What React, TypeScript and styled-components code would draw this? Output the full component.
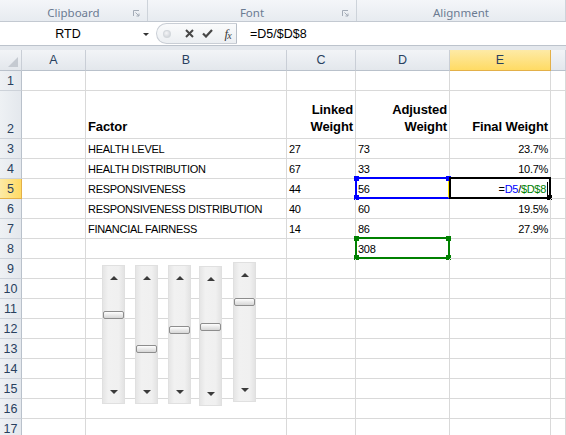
import React from 'react';
import styled, { createGlobalStyle } from 'styled-components';

const GlobalStyle = createGlobalStyle`
    *, *::before, *::after { box-sizing: border-box; }
    html, body { margin: 0; padding: 0; background: #fff; }
    body { font-family: "Liberation Sans", Arial, sans-serif; overflow: hidden; }
`

const Page = styled.div`
    width: 566px;
    height: 435px;
    overflow: hidden;
    background: #fff;
`

/* ---------- ribbon ---------- */
const Ribbon = styled.div`
    height: 22px;
    display: flex;
    background: linear-gradient(#f4f6f9, #e7ebf0);
    border-bottom: 1px solid #c3c9d1;
`
const Group = styled.div<{ $w?: number }>`
    position: relative;
    width: ${p => (p.$w ? `${p.$w}px` : 'auto')};
    flex: ${p => (p.$w ? 'none' : 1)};
    display: flex;
    align-items: center;
    justify-content: center;
    padding-top: 3px;
    border-right: 1px solid #cdd3da;
    font-family: "Noto Sans", "Liberation Sans", sans-serif;
    font-size: 11.5px;
    color: #6b7b92;
`
const Launcher = styled.svg`
    position: absolute;
    right: 7px;
    top: 10px;
`

/* ---------- formula bar ---------- */
const FormulaWrap = styled.div`
    height: 28px;
    background: #e4e8ed;
    padding-bottom: 4px;
`
const FormulaRow = styled.div`
    height: 24px;
    display: flex;
    background: #fff;
    border-bottom: 1px solid #bcc3cc;
`
const NameBox = styled.div`
    width: 156px;
    position: relative;
    display: flex;
    align-items: center;
    justify-content: center;
    padding-right: 20px;
    font-size: 12.5px;
    color: #000;
`
const DropArrow = styled.div`
    position: absolute;
    right: 7px;
    top: 11px;
    border-left: 3px solid transparent;
    border-right: 3px solid transparent;
    border-top: 3px solid #333;
`
const FxArea = styled.div`
    width: 81px;
    display: flex;
    align-items: center;
    border: 1px solid #c9ced5;
    border-right-color: #b7bec7;
    border-radius: 12px 0 0 12px;
    background: linear-gradient(#fafbfc, #eceff2);
    margin: 1px 0;
`
const Knob = styled.div`
    width: 8px;
    height: 8px;
    margin: 0 9px 0 6px;
    border-radius: 50%;
    background: radial-gradient(circle at 40% 35%, #f4f5f7, #c9cdd3);
    border: 1px solid #d3d7dc;
`
const IconBtn = styled.div`
    width: 20px;
    display: flex;
    justify-content: center;
    align-items: center;
`
const FxText = styled.span`
    font-family: "Liberation Serif", "DejaVu Serif", serif;
    font-style: italic;
    font-size: 13px;
    color: #3c3c3c;
    letter-spacing: -1px;
    margin-left: 2px;
    sub { font-size: 10px; vertical-align: -1px; }
`
const FormulaInput = styled.div`
    flex: 1;
    display: flex;
    align-items: center;
    padding-left: 13px;
    font-size: 12.5px;
    color: #000;
`

/* ---------- sheet ---------- */
const Sheet = styled.div`
    position: relative;
`
const Row = styled.div<{ $h: number }>`
    display: grid;
    grid-template-columns: 22px 64px 201px 69px 94px 101px 1fr;
    height: ${p => p.$h}px;
`
const ColHead = styled.div<{ $active?: boolean }>`
    display: flex;
    align-items: center;
    justify-content: center;
    font-size: 12.5px;
    color: #28405e;
    background: ${p => (p.$active ? 'linear-gradient(#fdeaa6, #ffdb64)' : 'linear-gradient(#f2f4f7, #e3e7ec)')};
    border-right: 1px solid ${p => (p.$active ? '#e3b049' : '#c9ced6')};
    border-bottom: 1px solid ${p => (p.$active ? '#e3b049' : '#b9c1cb')};
`
const Corner = styled.div`
    position: relative;
    background: linear-gradient(#f2f4f7, #e3e7ec);
    border-right: 1px solid #c9ced6;
    border-bottom: 1px solid #b9c1cb;
    &::after {
        content: '';
        position: absolute;
        right: 3px;
        bottom: 3px;
        border-left: 10px solid transparent;
        border-bottom: 10px solid #c5cad1;
    }
`
const RowHead = styled.div<{ $active?: boolean }>`
    display: flex;
    align-items: flex-end;
    justify-content: center;
    padding-bottom: 2px;
    font-size: 12.5px;
    color: #28405e;
    background: ${p => (p.$active ? 'linear-gradient(90deg, #fdeaa6, #ffdb64)' : 'linear-gradient(90deg, #eef1f4, #e4e8ed)')};
    border-right: 1px solid ${p => (p.$active ? '#e3b049' : '#b9c1cb')};
    border-bottom: 1px solid ${p => (p.$active ? '#e3b049' : '#cdd2d9')};
`
const Cell = styled.div<{ $align?: 'left' | 'right'; $bold?: boolean }>`
    position: relative;
    display: flex;
    align-items: flex-end;
    justify-content: ${p => (p.$align === 'right' ? 'flex-end' : 'flex-start')};
    text-align: ${p => p.$align ?? 'left'};
    padding: 0 2px ${p => (p.$bold ? '3px' : '2px')} 2px;
    border-right: 1px solid #d9d9d9;
    border-bottom: 1px solid #d9d9d9;
    font-size: ${p => (p.$bold ? '13px' : '11px')};
    font-weight: ${p => (p.$bold ? 700 : 400)};
    line-height: ${p => (p.$bold ? '17px' : '14px')};
    letter-spacing: ${p => (p.$bold ? '-0.1px' : '-0.3px')};
    white-space: pre;
    color: #000;
`

/* selection marquees that sit over a cell */
const Marquee = styled.div<{ $color: string; $side?: string }>`
    position: absolute;
    top: -2px;
    left: -1px;
    right: -1px;
    bottom: -1px;
    border: 2px solid ${p => p.$color};
    ${p => (p.$side ? `border-right-color: ${p.$side};` : '')}
    pointer-events: none;
`
const Handle = styled.span<{ $color: string; $pos: 'tl' | 'tr' | 'bl' | 'br' }>`
    position: absolute;
    width: 5px;
    height: 5px;
    background: ${p => p.$color};
    ${p => (p.$pos[0] === 't' ? 'top: -3px;' : 'bottom: -3px;')}
    ${p => (p.$pos[1] === 'l' ? 'left: -3px;' : 'right: -3px;')}
`
const Caret = styled.span`
    display: inline-block;
    width: 1px;
    height: 14px;
    margin-left: 1px;
    background: #000;
`
const Ref = styled.span<{ $c: string }>`
    color: ${p => p.$c};
`

/* form-control scroll bars placed on the sheet canvas */
const Slider = styled.div<{ $x: number; $y: number; $h: number }>`
    position: absolute;
    left: ${p => p.$x}px;
    top: ${p => p.$y}px;
    width: 23px;
    height: ${p => p.$h}px;
    background: linear-gradient(90deg, #e5e5e5, #f1f1f1 25%, #f0f0f0 75%, #e3e3e3);
    border: 1px solid #e0e0e0;
`
const Arrow = styled.div<{ $dir: 'up' | 'down' }>`
    position: absolute;
    left: 50%;
    margin-left: -4px;
    border-left: 4px solid transparent;
    border-right: 4px solid transparent;
    ${p => (p.$dir === 'up'
        ? 'top: 10px; border-bottom: 4px solid #3b3b3b;'
        : 'bottom: 9px; border-top: 4px solid #3b3b3b;')}
`
const Thumb = styled.div<{ $top: number }>`
    position: absolute;
    left: 0;
    right: 0;
    top: ${p => p.$top}px;
    height: 8px;
    border: 1px solid #8d8d8d;
    border-radius: 2px;
    background: linear-gradient(#fefefe, #ebebeb 45%, #d6d6d6);
`

type RowData = { b?: string; c?: string; d?: string; e?: string };

const rows: RowData[] = [
    { b: 'HEALTH LEVEL', c: '27', d: '73', e: '23.7%' },
    { b: 'HEALTH DISTRIBUTION', c: '67', d: '33', e: '10.7%' },
    { b: 'RESPONSIVENESS', c: '44', d: '56' },
    { b: 'RESPONSIVENESS DISTRIBUTION', c: '40', d: '60', e: '19.5%' },
    { b: 'FINANCIAL FAIRNESS', c: '14', d: '86', e: '27.9%' },
    { d: '308' },
];

const sliders = [
    { x: 102, y: 215, h: 139, t: 45 },
    { x: 135, y: 215, h: 139, t: 79 },
    { x: 168, y: 215, h: 139, t: 60 },
    { x: 199, y: 216, h: 140, t: 56 },
    { x: 233, y: 212, h: 140, t: 35 },
];

const LauncherIcon = () => (
    <Launcher width="7" height="7" viewBox="0 0 7 7">
        <path d="M0.5 6V0.5H6" fill="none" stroke="#a3abb6" />
        <path d="M2.5 2.5L6 6M6 3.5V6H3.5" fill="none" stroke="#a3abb6" />
    </Launcher>
);

const App = () => {
    return (
        <Page>
            <GlobalStyle />
            <Ribbon>
                <Group $w={148}>Clipboard<LauncherIcon /></Group>
                <Group $w={209}>Font<LauncherIcon /></Group>
                <Group>Alignment</Group>
            </Ribbon>

            <FormulaWrap>
                <FormulaRow>
                    <NameBox>
                        RTD
                        <DropArrow />
                    </NameBox>
                    <FxArea>
                        <Knob />
                        <IconBtn>
                            <svg width="9" height="9" viewBox="0 0 9 9">
                                <path d="M1 1L8 8M8 1L1 8" stroke="#474747" strokeWidth="2" />
                            </svg>
                        </IconBtn>
                        <IconBtn>
                            <svg width="11" height="9" viewBox="0 0 11 9">
                                <path d="M1 4.5L4 7.5L10 1" fill="none" stroke="#474747" strokeWidth="2.2" />
                            </svg>
                        </IconBtn>
                        <IconBtn>
                            <FxText>f<sub>x</sub></FxText>
                        </IconBtn>
                    </FxArea>
                    <FormulaInput>=D5/$D$8</FormulaInput>
                </FormulaRow>
            </FormulaWrap>

            <Sheet>
                <Row $h={21}>
                    <Corner />
                    <ColHead>A</ColHead>
                    <ColHead>B</ColHead>
                    <ColHead>C</ColHead>
                    <ColHead>D</ColHead>
                    <ColHead $active>E</ColHead>
                    <ColHead />
                </Row>

                <Row $h={20}>
                    <RowHead>1</RowHead>
                    <Cell /><Cell /><Cell /><Cell /><Cell /><Cell />
                </Row>

                <Row $h={48}>
                    <RowHead>2</RowHead>
                    <Cell />
                    <Cell $bold>Factor</Cell>
                    <Cell $bold $align="right">{'Linked\nWeight'}</Cell>
                    <Cell $bold $align="right">{'Adjusted\nWeight'}</Cell>
                    <Cell $bold $align="right">Final Weight</Cell>
                    <Cell />
                </Row>

                {rows.map((r, i) => {
                    const n = i + 3;
                    return (
                        <Row $h={20} key={n}>
                            <RowHead $active={n === 5}>{n}</RowHead>
                            <Cell />
                            <Cell>{r.b}</Cell>
                            <Cell>{r.c}</Cell>
                            <Cell>
                                {r.d}
                                {n === 5 && (
                                    <Marquee $color="#0000ff" $side="#ffe600">
                                        <Handle $color="#0000ff" $pos="tl" />
                                        <Handle $color="#0000ff" $pos="bl" />
                                        <Handle $color="#0000ff" $pos="tr" />
                                    </Marquee>
                                )}
                                {n === 8 && (
                                    <Marquee $color="#008000">
                                        <Handle $color="#008000" $pos="tl" />
                                        <Handle $color="#008000" $pos="tr" />
                                        <Handle $color="#008000" $pos="bl" />
                                        <Handle $color="#008000" $pos="br" />
                                    </Marquee>
                                )}
                            </Cell>
                            <Cell $align="right">
                                {n === 5 ? (
                                    <>
                                        =<Ref $c="#0000ff">D5</Ref>/<Ref $c="#008000">$D$8</Ref>
                                        <Caret />
                                        <Marquee $color="#000">
                                            <Handle $color="#000" $pos="br" />
                                        </Marquee>
                                    </>
                                ) : r.e}
                            </Cell>
                            <Cell />
                        </Row>
                    );
                })}

                {Array.from({ length: 9 }, (_, i) => i + 9).map(n => (
                    <Row $h={20} key={n}>
                        <RowHead>{n}</RowHead>
                        <Cell /><Cell /><Cell /><Cell /><Cell /><Cell />
                    </Row>
                ))}

                {sliders.map((s, i) => (
                    <Slider key={i} $x={s.x} $y={s.y} $h={s.h}>
                        <Arrow $dir="up" />
                        <Thumb $top={s.t} />
                        <Arrow $dir="down" />
                    </Slider>
                ))}
            </Sheet>
        </Page>
    );
};

export default App;
